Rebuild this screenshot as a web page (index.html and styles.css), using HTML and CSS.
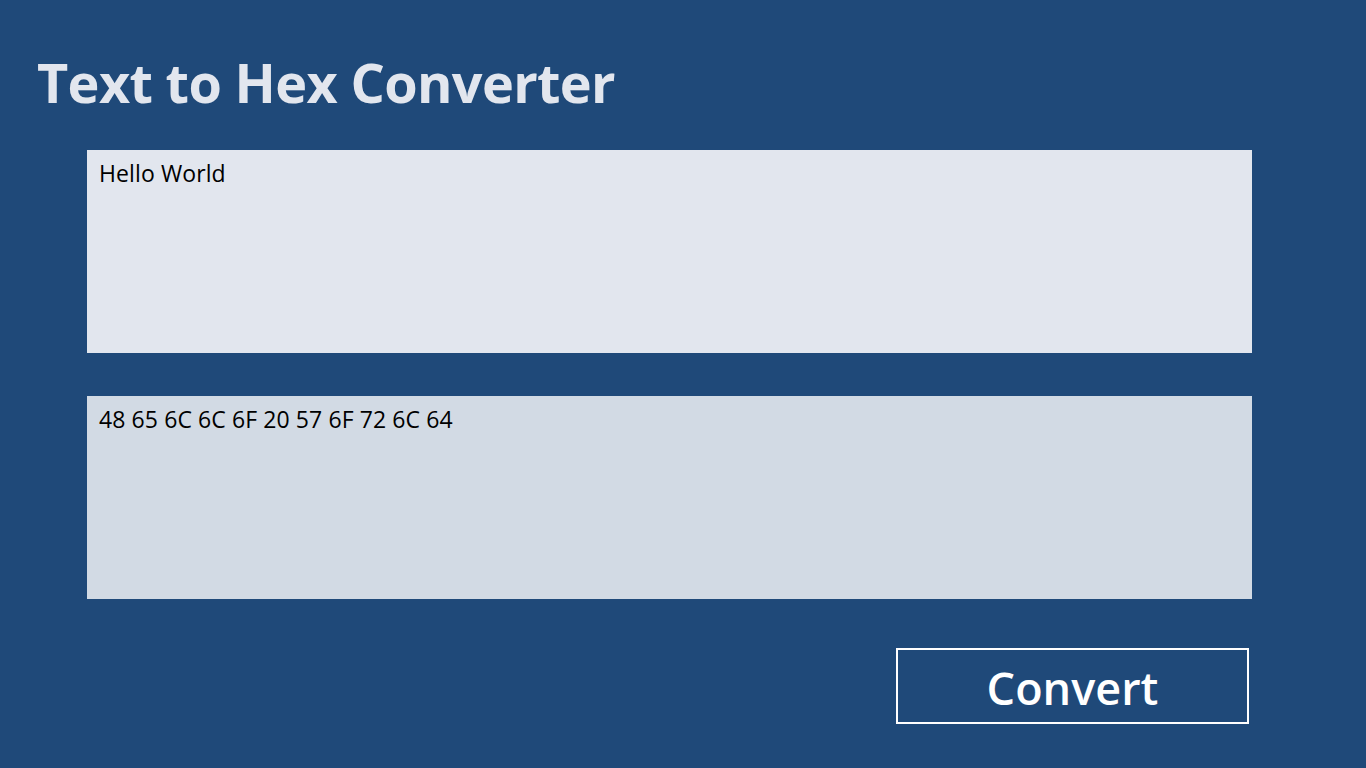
FILE: index.html
```html
<!DOCTYPE html>
<html>
<head>
<meta charset="utf-8">
<link rel="stylesheet" href="styles.css">
</head>
<body>
<div class="page">
  <h1 class="title">Text to Hex Converter</h1>
  <div class="boxes">
    <div class="box box-input">Hello World</div>
    <div class="box box-output">48 65 6C 6C 6F 20 57 6F 72 6C 64</div>
  </div>
  <div class="actions">
    <button class="convert">Convert</button>
  </div>
</div>
</body>
</html>
```

FILE: styles.css
```css
html, body {
  margin: 0;
  padding: 0;
  background: #1f4979;
  height: 100%;
}
.page {
  width: 1366px;
  height: 768px;
  box-sizing: border-box;
  padding: 50px 0 0 0;
  font-family: "Open Sans", "Noto Sans", sans-serif;
}
.title {
  margin: 0 0 0 37px;
  font-size: 54px;
  font-weight: 700;
  line-height: 64px;
  color: #e2e6ee;
  letter-spacing: -0.65px;
}
.boxes {
  margin: 36px 0 0 87px;
  width: 1165px;
  display: flex;
  flex-direction: column;
  gap: 43px;
}
.box {
  height: 203px;
  box-sizing: border-box;
  padding: 8px 12px;
  font-size: 23px;
  line-height: 30px;
  letter-spacing: 0.1px;
  color: #000;
}
.box-input { background: #e2e6ee; }
.box-output { background: #d2dae4; }
.actions {
  margin-top: 49px;
  width: 1249px;
  display: flex;
  justify-content: flex-end;
}
.convert {
  width: 353px;
  height: 76px;
  box-sizing: border-box;
  border: 2px solid #fff;
  background: transparent;
  color: #fff;
  font-family: "Open Sans", "Noto Sans", sans-serif;
  font-size: 45px;
  font-weight: 600;
  padding: 3px 0 0 0;
  line-height: 1;
}
```
